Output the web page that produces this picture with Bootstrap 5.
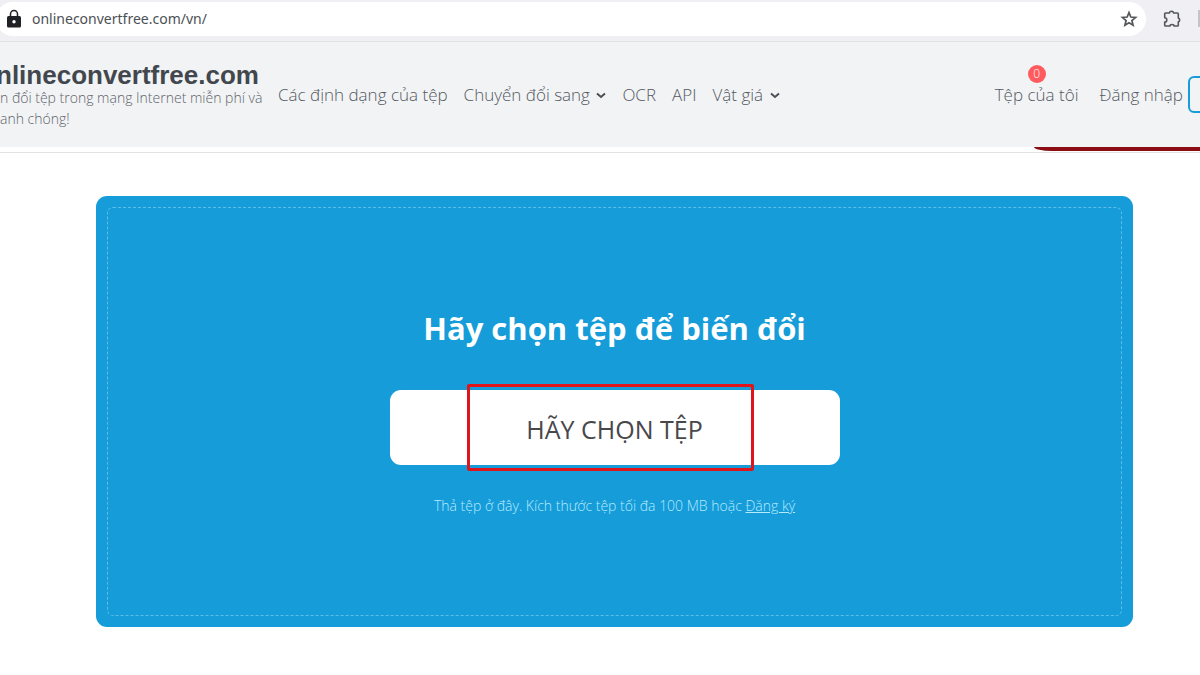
<!DOCTYPE html>
<html lang="vi">
<head>
<meta charset="utf-8">
<meta name="viewport" content="width=device-width, initial-scale=1">
<title>onlineconvertfree.com</title>
<link href="https://cdn.jsdelivr.net/npm/bootstrap@5.3.0/dist/css/bootstrap.min.css" rel="stylesheet">
<style>
body { font-family: "Open Sans", "Noto Sans", sans-serif; background: #fff; overflow-x: hidden; }
.browser-bar { height: 42px; background: #f0f0f4; border-bottom: 1px solid #dfe1e4; }
.address { height: 34px; margin-left: -4px; background: #fff; border-radius: 17px; }
.address input { font: 14px/20px "Noto Sans", sans-serif; color: #4c5054; background: transparent; outline: 0; }
.icon-btn { line-height: 0; color: #54575b; }
.tab-edge { width: 2px; height: 17px; background: #c4c5c9; }
.site-header { height: 105px; background: #f1f3f5; }
.site-header a { color: #55595f; text-decoration: none; white-space: nowrap; }
.brand-block { width: 266px; padding-top: 3px; }
.site-header .brand-name { font: bold 26px/24px "Liberation Sans", sans-serif; color: #42474e; margin-left: -4px; }
.tagline { font-size: 14px; line-height: 21px; font-weight: 300; color: #5f646a; }
.main-nav, .account-nav { font-size: 17px; line-height: 24px; font-weight: 350; }
.main-nav { gap: 16px; margin-left: 12px; }
.main-nav svg { margin-left: 2px; }
.count { width: 18px; height: 18px; font-size: 12px; line-height: 18px; background: #ff5b5f; color: #fff; }
.account-nav { gap: 21px; }
.signup { width: 120px; height: 37px; margin-left: -16px; margin-right: -108px; border: 2px solid #159cd9; border-radius: 6px; }
.subline { height: 6px; border-bottom: 1px solid #e1e2e4; }
.red-strip { width: 166px; height: 4px; background: #8b0c12; border-radius: 0 0 0 18px / 0 0 0 4px; }
.drop-wrap { padding: 43px 67px 48px 96px; }
.drop-card { background: #159cd9; border-radius: 11px; padding: 11px; }
.drop-zone { min-height: 409px; border: 1px dashed #5dbde7; border-radius: 6px; padding: 96px 16px; }
.drop-title { font-size: 31px; line-height: 48px; font-weight: 700; margin-bottom: 38px; }
.choose { width: 450px; max-width: 100%; }
.choose-btn { height: 75px; border: 0; border-radius: 11px; background: #fff; color: #48484b; font-size: 25px; font-weight: 400; padding: 8px 0 4px; }
.highlight { inset: -6px 86px -6px 77px; border: 3px solid #e0151b; border-radius: 2px; pointer-events: none; }
.drop-note { font-size: 14px; line-height: 22px; font-weight: 300; color: #b5eaff; margin-top: 30px; }
.drop-note a { color: inherit; }
</style>
</head>
<body>
<div class="browser-bar d-flex align-items-center pb-1">
  <div class="address d-flex align-items-center flex-grow-1 ps-2 pe-2">
    <svg class="flex-shrink-0" width="20" height="20" viewBox="-2 0 20 20" aria-hidden="true"><path d="M4.500 8V5a3.500 3.500 0 0 1 7 0V8" fill="none" stroke="#202124" stroke-width="1.500"/><rect x="1" y="7" width="14" height="11.500" rx="1.500" fill="#202124"/><circle cx="8" cy="12.700" r="1.700" fill="#fff"/></svg>
    <input class="border-0 flex-grow-1 p-0 ms-2" type="text" value="onlineconvertfree.com/vn/" aria-label="URL">
    <button class="icon-btn btn p-0 border-0" type="button" aria-label="Bookmark"><svg width="18" height="18" viewBox="0 0 18 18"><path d="M9 2.500l1.800 4.500 4.800.400-3.700 3.100 1.200 4.700L9 12.700l-4.100 2.500 1.200-4.700-3.700-3.100 4.800-.400z" fill="none" stroke="currentColor" stroke-width="1.700"/></svg></button>
  </div>
  <button class="icon-btn btn p-0 border-0 mx-3" type="button" aria-label="Extensions"><svg width="20" height="20" viewBox="0 0 20 20"><path d="M3.500 4h4a2 1.800 0 0 1 4 0h4q.800 0 .800.800V9a2 2 0 0 1 0 3.800v3.400q0 .800-.800.800h-3.500a2 1.500 0 0 0-4 0H3.500q-.800 0-.800-.800V13a2.100 2.100 0 0 0 0-4.200v-4q0-.800.800-.800z" fill="none" stroke="currentColor" stroke-width="1.600" stroke-linejoin="round"/></svg></button>
  <span class="tab-edge"></span>
</div>
<header class="site-header d-flex align-items-center overflow-hidden">
  <div class="brand-block flex-shrink-0">
    <a class="brand-name d-block" href="#">nlineconvertfree.com</a>
    <div class="tagline">n đổi tệp trong mạng Internet miễn phí và anh chóng!</div>
  </div>
  <nav class="main-nav d-flex">
    <a href="#">Các định dạng của tệp</a>
    <a href="#">Chuyển đổi sang <svg width="10" height="7" viewBox="0 0 10 7"><path d="M1 1.500l4 3.500 4-3.500" fill="none" stroke="#4b4f54" stroke-width="2"/></svg></a>
    <a href="#">OCR</a>
    <a href="#">API</a>
    <a href="#">Vật giá <svg width="10" height="7" viewBox="0 0 10 7"><path d="M1 1.500l4 3.500 4-3.500" fill="none" stroke="#4b4f54" stroke-width="2"/></svg></a>
  </nav>
  <div class="account-nav d-flex align-items-center ms-auto">
    <a class="position-relative" href="#">Tệp của tôi<span class="count position-absolute bottom-100 start-50 translate-middle-x rounded-circle text-center">0</span></a>
    <a href="#">Đăng nhập</a>
    <button class="signup btn p-0" type="button" aria-label="Đăng ký"></button>
  </div>
</header>
<div class="subline"><div class="red-strip ms-auto"></div></div>
<main class="drop-wrap">
  <div class="drop-card">
    <div class="drop-zone d-flex flex-column align-items-center text-center">
      <h1 class="drop-title text-white">Hãy chọn tệp để biến đổi</h1>
      <div class="choose position-relative">
        <button class="choose-btn btn w-100" type="button">HÃY CHỌN TỆP</button>
        <span class="highlight position-absolute"></span>
      </div>
      <p class="drop-note mb-0">Thả tệp ở đây. Kích thước tệp tối đa 100 MB hoặc <a href="#">Đăng ký</a></p>
    </div>
  </div>
</main>
<script src="https://cdn.jsdelivr.net/npm/bootstrap@5.3.0/dist/js/bootstrap.bundle.min.js"></script>
</body>
</html>
